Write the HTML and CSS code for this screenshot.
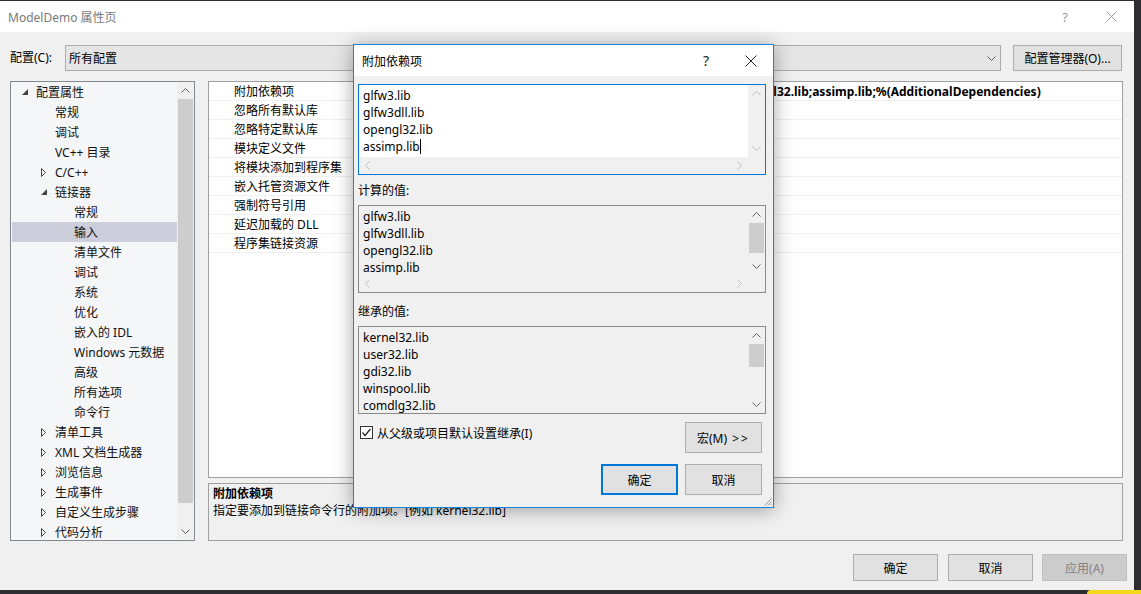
FILE: index.html
```html
<!DOCTYPE html>
<html lang="zh-CN">
<head>
  <meta charset="UTF-8">
  <title>ModelDemo 属性页</title>
  <link rel="stylesheet" href="styles.css">
</head>
<body>
  <div class="window">
    <!-- Title bar -->
    <div class="titlebar">
      <span class="title">ModelDemo 属性页</span>
      <span class="title-btn">?</span>
      <span class="title-btn">
        <svg width="11" height="11" viewBox="0 0 11 11"><path d="M0.5 0.5L10.5 10.5M10.5 0.5L0.5 10.5" stroke="currentColor" fill="none"/></svg>
      </span>
    </div>

    <!-- Configuration row -->
    <div class="config-row">
      <span class="config-label">配置(C):</span>
      <div class="combo">
        <span>所有配置</span>
        <svg width="9" height="5" viewBox="0 0 9 5"><polyline points="0.5,0.5 4.5,4.5 8.5,0.5" fill="none" stroke="#606060"/></svg>
      </div>
      <button class="btn btn-mgr">配置管理器(O)...</button>
    </div>

    <div class="main">
      <!-- Tree -->
      <div class="tree">
        <ul class="tree-list">
          <li class="node l0"><span class="tog"><svg width="6" height="6" viewBox="0 0 6 6"><polygon points="6,0 6,6 0,6" fill="#444"/></svg></span>配置属性</li>
          <li class="node l1"><span class="tog"></span>常规</li>
          <li class="node l1"><span class="tog"></span>调试</li>
          <li class="node l1"><span class="tog"></span>VC++ 目录</li>
          <li class="node l1"><span class="tog"><svg width="6" height="9" viewBox="0 0 6 9"><polygon points="0.5,0.5 4.5,4.5 0.5,8.5" fill="none" stroke="#444"/></svg></span>C/C++</li>
          <li class="node l1"><span class="tog"><svg width="6" height="6" viewBox="0 0 6 6"><polygon points="6,0 6,6 0,6" fill="#444"/></svg></span>链接器</li>
          <li class="node l2"><span class="tog"></span>常规</li>
          <li class="node l2 selected"><span class="tog"></span>输入</li>
          <li class="node l2"><span class="tog"></span>清单文件</li>
          <li class="node l2"><span class="tog"></span>调试</li>
          <li class="node l2"><span class="tog"></span>系统</li>
          <li class="node l2"><span class="tog"></span>优化</li>
          <li class="node l2"><span class="tog"></span>嵌入的 IDL</li>
          <li class="node l2"><span class="tog"></span>Windows 元数据</li>
          <li class="node l2"><span class="tog"></span>高级</li>
          <li class="node l2"><span class="tog"></span>所有选项</li>
          <li class="node l2"><span class="tog"></span>命令行</li>
          <li class="node l1"><span class="tog"><svg width="6" height="9" viewBox="0 0 6 9"><polygon points="0.5,0.5 4.5,4.5 0.5,8.5" fill="none" stroke="#444"/></svg></span>清单工具</li>
          <li class="node l1"><span class="tog"><svg width="6" height="9" viewBox="0 0 6 9"><polygon points="0.5,0.5 4.5,4.5 0.5,8.5" fill="none" stroke="#444"/></svg></span>XML 文档生成器</li>
          <li class="node l1"><span class="tog"><svg width="6" height="9" viewBox="0 0 6 9"><polygon points="0.5,0.5 4.5,4.5 0.5,8.5" fill="none" stroke="#444"/></svg></span>浏览信息</li>
          <li class="node l1"><span class="tog"><svg width="6" height="9" viewBox="0 0 6 9"><polygon points="0.5,0.5 4.5,4.5 0.5,8.5" fill="none" stroke="#444"/></svg></span>生成事件</li>
          <li class="node l1"><span class="tog"><svg width="6" height="9" viewBox="0 0 6 9"><polygon points="0.5,0.5 4.5,4.5 0.5,8.5" fill="none" stroke="#444"/></svg></span>自定义生成步骤</li>
          <li class="node l1"><span class="tog"><svg width="6" height="9" viewBox="0 0 6 9"><polygon points="0.5,0.5 4.5,4.5 0.5,8.5" fill="none" stroke="#444"/></svg></span>代码分析</li>
        </ul>
        <div class="sb-v tree-sb">
          <div class="sb-btn"><svg width="9" height="5" viewBox="0 0 9 5"><polyline points="0.5,4.5 4.5,0.5 8.5,4.5" fill="none" stroke="currentColor"/></svg></div>
          <div class="sb-thumb tree-thumb"></div>
          <div class="sb-track"></div>
          <div class="sb-btn"><svg width="9" height="5" viewBox="0 0 9 5"><polyline points="0.5,0.5 4.5,4.5 8.5,0.5" fill="none" stroke="currentColor"/></svg></div>
        </div>
      </div>

      <!-- Property grid + description -->
      <div class="right">
        <div class="grid">
          <div class="row"><span class="name">附加依赖项</span><span class="value">glfw3.lib;glfw3dll.lib;opengl32.lib;assimp.lib;%(AdditionalDependencies)</span></div>
          <div class="row"><span class="name">忽略所有默认库</span></div>
          <div class="row"><span class="name">忽略特定默认库</span></div>
          <div class="row"><span class="name">模块定义文件</span></div>
          <div class="row"><span class="name">将模块添加到程序集</span></div>
          <div class="row"><span class="name">嵌入托管资源文件</span></div>
          <div class="row"><span class="name">强制符号引用</span></div>
          <div class="row"><span class="name">延迟加载的 DLL</span></div>
          <div class="row"><span class="name">程序集链接资源</span></div>
        </div>
        <div class="desc">
          <div class="desc-title">附加依赖项</div>
          <div class="desc-text">指定要添加到链接命令行的附加项。[例如 kernel32.lib]</div>
        </div>
      </div>
    </div>

    <div class="footer">
      <button class="btn btn-foot">确定</button>
      <button class="btn btn-foot">取消</button>
      <button class="btn btn-foot disabled">应用(A)</button>
    </div>

    <!-- Modal dialog -->
    <div class="dialog">
      <div class="dlg-title">
        <span class="dlg-name">附加依赖项</span>
        <span class="dlg-btn help">?</span>
        <span class="dlg-btn close">
          <svg width="12" height="12" viewBox="0 0 12 12"><path d="M0.5 0.5L11.5 11.5M11.5 0.5L0.5 11.5" stroke="#222" fill="none"/></svg>
        </span>
      </div>
      <div class="dlg-body">
        <div class="textbox edit">
          <div class="lines">
            <div>glfw3.lib</div>
            <div>glfw3dll.lib</div>
            <div>opengl32.lib</div>
            <div>assimp.lib<span class="caret"></span></div>
          </div>
          <div class="sb-v">
            <div class="sb-btn off"><svg width="9" height="5" viewBox="0 0 9 5"><polyline points="0.5,4.5 4.5,0.5 8.5,4.5" fill="none" stroke="currentColor"/></svg></div>
            <div class="sb-track"></div>
            <div class="sb-btn off"><svg width="9" height="5" viewBox="0 0 9 5"><polyline points="0.5,0.5 4.5,4.5 8.5,0.5" fill="none" stroke="currentColor"/></svg></div>
          </div>
          <div class="sb-h">
            <div class="sb-btn off"><svg width="5" height="9" viewBox="0 0 5 9"><polyline points="4.5,0.5 0.5,4.5 4.5,8.5" fill="none" stroke="currentColor"/></svg></div>
            <div class="sb-track"></div>
            <div class="sb-btn off"><svg width="5" height="9" viewBox="0 0 5 9"><polyline points="0.5,0.5 4.5,4.5 0.5,8.5" fill="none" stroke="currentColor"/></svg></div>
          </div>
          <div class="sb-corner"></div>
        </div>

        <div class="field-label">计算的值:</div>
        <div class="textbox readonly">
          <div class="lines">
            <div>glfw3.lib</div>
            <div>glfw3dll.lib</div>
            <div>opengl32.lib</div>
            <div>assimp.lib</div>
          </div>
          <div class="sb-v">
            <div class="sb-btn"><svg width="9" height="5" viewBox="0 0 9 5"><polyline points="0.5,4.5 4.5,0.5 8.5,4.5" fill="none" stroke="currentColor"/></svg></div>
            <div class="sb-thumb calc-thumb"></div>
            <div class="sb-track"></div>
            <div class="sb-btn"><svg width="9" height="5" viewBox="0 0 9 5"><polyline points="0.5,0.5 4.5,4.5 8.5,0.5" fill="none" stroke="currentColor"/></svg></div>
          </div>
          <div class="sb-h">
            <div class="sb-btn off"><svg width="5" height="9" viewBox="0 0 5 9"><polyline points="4.5,0.5 0.5,4.5 4.5,8.5" fill="none" stroke="currentColor"/></svg></div>
            <div class="sb-track"></div>
            <div class="sb-btn off"><svg width="5" height="9" viewBox="0 0 5 9"><polyline points="0.5,0.5 4.5,4.5 0.5,8.5" fill="none" stroke="currentColor"/></svg></div>
          </div>
          <div class="sb-corner"></div>
        </div>

        <div class="field-label second">继承的值:</div>
        <div class="textbox readonly single">
          <div class="lines">
            <div>kernel32.lib</div>
            <div>user32.lib</div>
            <div>gdi32.lib</div>
            <div>winspool.lib</div>
            <div>comdlg32.lib</div>
          </div>
          <div class="sb-v">
            <div class="sb-btn"><svg width="9" height="5" viewBox="0 0 9 5"><polyline points="0.5,4.5 4.5,0.5 8.5,4.5" fill="none" stroke="currentColor"/></svg></div>
            <div class="sb-thumb inh-thumb"></div>
            <div class="sb-track"></div>
            <div class="sb-btn"><svg width="9" height="5" viewBox="0 0 9 5"><polyline points="0.5,0.5 4.5,4.5 8.5,0.5" fill="none" stroke="currentColor"/></svg></div>
          </div>
        </div>

        <div class="check-row">
          <label class="check">
            <span class="box"><svg width="11" height="11" viewBox="0 0 11 11"><polyline points="1.5,5.5 4,8.5 9.5,2" fill="none" stroke="#222" stroke-width="1.2"/></svg></span>
            从父级或项目默认设置继承(I)
          </label>
          <button class="btn btn-dlg">宏(M) <span class="gt">&gt;&gt;</span></button>
        </div>

        <div class="ok-row">
          <button class="btn btn-dlg default">确定</button>
          <button class="btn btn-dlg">取消</button>
        </div>

        <svg class="grip" width="8" height="8" viewBox="0 0 8 8"><path d="M7.5 0.5L0.5 7.5M7.5 3.5L3.5 7.5M7.5 6L6 7.5" stroke="#9a9a9a" fill="none"/></svg>
      </div>
    </div>
  </div>
  <div class="desk-strip"><span class="blob"></span></div>
</body>
</html>
```

FILE: styles.css
```css
/* General */
* {
  box-sizing: border-box;
}

html, body {
  margin: 0;
  padding: 0;
}

body {
  background: #2d2d30;
  font-family: "Noto Sans", "Noto Sans CJK SC", sans-serif;
  font-size: 12px;
  color: #000;
  height: 594px;
  overflow: hidden;
}

.window {
  width: 1134px;
  height: 589px;
  margin-top: 1px;
  background: #f0f0f0;
  position: relative;
  display: flex;
  flex-direction: column;
}

.btn {
  font: inherit;
  color: #000;
  background: #e1e1e1;
  border: 1px solid #adadad;
  padding: 0;
  cursor: default;
}

/* Title bar */
.titlebar {
  height: 31px;
  background: #fff;
  display: flex;
  align-items: center;
  padding-left: 8px;
}

.title {
  flex: 1;
  color: #7a7a7a;
}

.title-btn {
  width: 46px;
  height: 31px;
  display: flex;
  align-items: center;
  justify-content: center;
  color: #9a9a9a;
  font-size: 13px;
}

/* Config row */
.config-row {
  height: 49px;
  display: flex;
  align-items: flex-start;
  padding: 13px 0 0 10px;
}

.config-label {
  width: 55px;
  line-height: 26px;
}

.combo {
  width: 936px;
  height: 26px;
  border: 1px solid #acacac;
  background: #e5e5e5;
  display: flex;
  align-items: center;
  justify-content: space-between;
  padding: 0 4px 0 3px;
}

.btn-mgr {
  margin-left: 12px;
  width: 109px;
  height: 26px;
}

/* Main area */
.main {
  height: 460px;
  display: flex;
  padding-left: 10px;
  gap: 13px;
}

.tree {
  width: 185px;
  border: 1px solid #828790;
  background: #f5f6f7;
  display: flex;
}

.tree-list {
  flex: 1;
  list-style: none;
  margin: 0;
  padding: 0;
  overflow: hidden;
}

.node {
  height: 20px;
  display: flex;
  align-items: center;
  white-space: nowrap;
  color: #111;
}

.node .tog {
  width: 14px;
  display: flex;
  align-items: center;
}

.l0 { padding-left: 11px; }
.l1 { padding-left: 30px; }
.l2 { padding-left: 49px; }

.node.selected {
  background: #cccedb;
  margin-left: 1px;
  padding-left: 48px;
}

/* Scrollbars */
.sb-v {
  width: 17px;
  display: flex;
  flex-direction: column;
  background: #f0f0f0;
}

.sb-h {
  height: 17px;
  display: flex;
  background: #f0f0f0;
}

.sb-btn {
  width: 17px;
  height: 17px;
  display: flex;
  align-items: center;
  justify-content: center;
  color: #606060;
  flex: none;
}

.sb-btn.off {
  color: #bfbfbf;
}

.sb-track {
  flex: 1;
}

.sb-thumb {
  background: #cdcdcd;
  margin: 0 1px;
  flex: none;
}

.tree-thumb { height: 404px; }
.calc-thumb { height: 30px; }
.inh-thumb { height: 23px; }

.sb-corner {
  background: #f0f0f0;
}

/* Property grid */
.right {
  width: 915px;
  display: flex;
  flex-direction: column;
}

.grid {
  height: 397px;
  border: 1px solid #a0a0a0;
  background: #fff;
}

.row {
  height: 19px;
  border-bottom: 1px solid #f0f0f0;
  display: flex;
  align-items: center;
  white-space: nowrap;
}

.row .name {
  width: 403px;
  padding-left: 25px;
  flex: none;
}

.row .value {
  font-weight: bold;
}

.desc {
  margin-top: 5px;
  height: 58px;
  border: 1px solid #a0a0a0;
  padding: 1px 4px;
  line-height: 17px;
}

.desc-title {
  font-weight: bold;
}

/* Footer buttons */
.footer {
  display: flex;
  justify-content: flex-end;
  padding: 13px 7px 0 0;
}

.btn-foot {
  width: 85px;
  height: 27px;
  margin-left: 10px;
}

.btn-foot.disabled {
  margin-left: 9px;
  background: #cccccc;
  border-color: #bfbfbf;
  color: #838383;
}

/* Dialog */
.dialog {
  position: absolute;
  left: 353px;
  top: 43px;
  width: 421px;
  height: 464px;
  border: 1px solid #1883d7;
  background: #f0f0f0;
  box-shadow: 0 2px 18px rgba(0, 0, 0, 0.35);
  display: flex;
  flex-direction: column;
}

.dlg-title {
  height: 31px;
  background: #fff;
  display: flex;
  align-items: center;
  padding-left: 8px;
}

.dlg-name {
  flex: 1;
}

.dlg-btn {
  height: 31px;
  display: flex;
  align-items: center;
  justify-content: center;
  font-size: 14px;
  color: #222;
}

.dlg-btn.help { width: 44px; }
.dlg-btn.close { width: 45px; }

.dlg-body {
  flex: 1;
  position: relative;
  display: flex;
  flex-direction: column;
  padding: 8px 7px 0 4px;
}

.textbox {
  height: 88px;
  border: 1px solid #8a8a8a;
  display: grid;
  grid-template-columns: 1fr 17px;
  grid-template-rows: 1fr 17px;
  overflow: hidden;
}

.textbox.edit {
  height: 91px;
  border-color: #0078d7;
  background: #fff;
}

.textbox.readonly {
  background: #f0f0f0;
}

.textbox.single {
  grid-template-rows: 1fr;
}

.lines {
  padding: 2px 4px;
  line-height: 17px;
  white-space: nowrap;
  overflow: hidden;
}

.caret {
  display: inline-block;
  width: 1px;
  height: 15px;
  background: #000;
  vertical-align: -3px;
}

.field-label {
  line-height: 18px;
  margin: 7px 0 5px;
}

.field-label.second {
  margin-top: 10px;
}

.check-row {
  margin-top: 8px;
  display: flex;
  align-items: center;
  justify-content: space-between;
  padding-right: 4px;
}

.check {
  display: flex;
  align-items: center;
  gap: 4px;
  margin-left: 2px;
  margin-top: -10px;
}

.check .box {
  width: 13px;
  height: 13px;
  border: 1px solid #333;
  background: #fff;
  display: flex;
  align-items: center;
  justify-content: center;
}

.btn-dlg {
  width: 77px;
  height: 31px;
}

.btn-dlg .gt {
  letter-spacing: 2px;
  margin-left: 2px;
}

.ok-row {
  margin-top: 11px;
  display: flex;
  justify-content: flex-end;
  gap: 7px;
  padding-right: 4px;
}

.btn-dlg.default {
  border-color: #0078d7;
  box-shadow: inset 0 0 0 1px #0078d7;
}

.grip {
  position: absolute;
  right: 1px;
  bottom: 1px;
}

/* Strip of the desktop below the window */
.desk-strip {
  height: 4px;
  display: flex;
  justify-content: flex-end;
}

.blob {
  width: 54px;
  background: #f4d81c;
  border-radius: 6px 0 0 0;
}
```
